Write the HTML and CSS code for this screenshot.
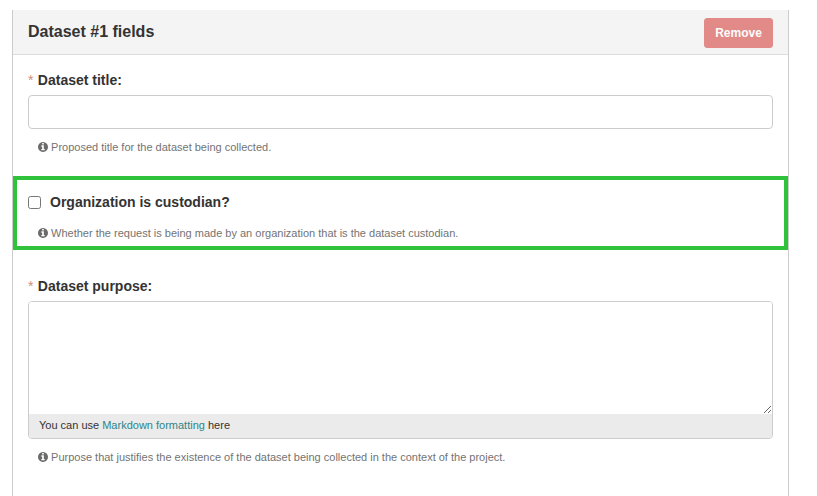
FILE: index.html
```html
<!DOCTYPE html>
<html lang="en">
  <head>
    <meta charset="UTF-8" />
    <title>Dataset fields</title>
    <link rel="stylesheet" href="styles.css">
  </head>
  <body>
    <svg class="defs" width="0" height="0">
      <symbol id="info" viewBox="0 128 1536 1536">
        <path d="M1024 1376v-160q0-14-9-23t-23-9h-96v-512q0-14-9-23t-23-9h-320q-14 0-23 9t-9 23v160q0 14 9 23t23 9h96v320h-96q-14 0-23 9t-9 23v160q0 14 9 23t23 9h448q14 0 23-9t9-23zm-128-896v-160q0-14-9-23t-23-9h-192q-14 0-23 9t-9 23v160q0 14 9 23t23 9h192q14 0 23-9t9-23zm640 416q0 209-103 385.5t-279.5 279.5-385.5 103-385.5-103-279.5-279.5-103-385.5 103-385.5 279.5-279.5 385.5-103 385.5 103 279.5 279.5 103 385.5z" />
      </symbol>
    </svg>

    <div class="panel">
      <div class="panel-heading">
        <h3>Dataset #1 fields</h3>
        <button class="btn-remove" disabled>Remove</button>
      </div>

      <div class="field field-title">
        <label for="title"><span class="required">*</span> Dataset title:</label>
        <input id="title" class="form-control" type="text" />
        <p class="help">
          <svg class="icon"><use href="#info" /></svg>
          Proposed title for the dataset being collected.
        </p>
      </div>

      <div class="field-highlight">
        <label class="check-label">
          <input type="checkbox" />
          Organization is custodian?
        </label>
        <p class="help">
          <svg class="icon"><use href="#info" /></svg>
          Whether the request is being made by an organization that is the dataset custodian.
        </p>
      </div>

      <div class="field field-purpose">
        <label for="purpose"><span class="required">*</span> Dataset purpose:</label>
        <div class="editor">
          <textarea id="purpose"></textarea>
          <div class="editor-note">You can use <a href="#">Markdown formatting</a> here</div>
        </div>
        <p class="help">
          <svg class="icon"><use href="#info" /></svg>
          Purpose that justifies the existence of the dataset being collected in the context of the project.
        </p>
      </div>
    </div>
  </body>
</html>
```

FILE: styles.css
```css
* {
  margin: 0;
  padding: 0;
  box-sizing: border-box;
  font-family: "Liberation Sans", Arial, sans-serif;
}

html,
body {
  height: 100%;
  overflow: hidden;
}

body {
  background-color: #fff;
  color: #333;
  padding: 10px 28px 0 12px;
}

.defs {
  position: absolute;
}

.panel {
  height: 100%;
  border-left: 1px solid #ccc;
  border-right: 1px solid #ccc;
}

.panel-heading {
  height: 45px;
  display: flex;
  align-items: center;
  justify-content: space-between;
  padding: 1px 15px 0;
  background-color: #f4f4f4;
  border-bottom: 1px solid #ddd;
}

.panel-heading h3 {
  font-size: 16px;
  font-weight: bold;
  color: #333;
  margin-top: -1px;
}

.btn-remove {
  width: 69px;
  height: 30px;
  border: 1px solid #d9534f;
  border-radius: 3px;
  background-color: #d9534f;
  opacity: 0.65;
  color: #fff;
  font-size: 12px;
  font-weight: bold;
}

.field {
  padding: 0 15px;
}

.field-title {
  padding-top: 17px;
  height: 121px;
}

.field-purpose {
  padding-top: 28px;
}

.field label {
  display: block;
  font-size: 14px;
  font-weight: bold;
  line-height: 16px;
  margin-bottom: 7px;
  color: #333;
}

.required {
  color: #cf8d80;
  font-weight: normal;
  margin-right: 0.5px;
}

.form-control {
  display: block;
  width: 100%;
  height: 34px;
  border: 1px solid #ccc;
  border-radius: 4px;
  background-color: #fff;
}

.help {
  font-size: 11px;
  line-height: 14px;
  color: #737373;
  padding-left: 10px;
  margin-top: 11px;
}

.icon {
  width: 10px;
  height: 10px;
  fill: #6b6b6b;
  vertical-align: -1px;
}

.field-highlight {
  height: 74px;
  border: 4px solid #30c23b;
  padding: 0 11px;
}

.check-label {
  display: flex;
  align-items: center;
  gap: 9px;
  height: 16px;
  margin-top: 14px;
  font-size: 14px;
  font-weight: bold;
  color: #333;
}

.check-label input {
  width: 13px;
  height: 13px;
  margin: 0;
}

.field-highlight .help {
  margin-top: 16px;
}

.editor {
  border: 1px solid #ccc;
  border-radius: 4px;
  overflow: hidden;
}

.editor textarea {
  display: block;
  width: 100%;
  height: 112px;
  border: none;
  outline: none;
  resize: vertical;
}

.editor-note {
  height: 24px;
  line-height: 22px;
  padding-left: 10px;
  background-color: #ebebeb;
  font-size: 11px;
  color: #333;
}

.editor-note a {
  color: #2f8588;
  text-decoration: none;
}
```
